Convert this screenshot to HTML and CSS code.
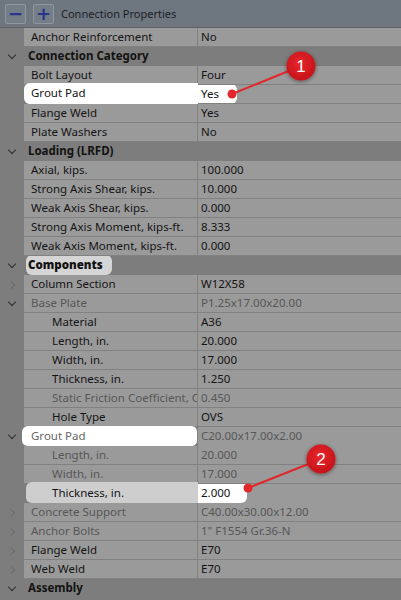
FILE: index.html
```html
<!DOCTYPE html>
<html lang="en">
<head>
  <meta charset="UTF-8" />
  <title>Connection Properties</title>
  <link rel="stylesheet" href="styles.css">
</head>
<body>

  <div class="panel">
    <div class="toolbar">
      <button class="tool">&minus;</button>
      <button class="tool">+</button>
      <span class="title">Connection Properties</span>
    </div>

    <div class="sheet">
      <div class="row"><span class="gut"></span><span class="name">Anchor Reinforcement</span><span class="val">No</span></div>

      <div class="row cat"><span class="gut"><i class="chev down"></i></span><span class="name">Connection Category</span></div>
      <div class="row"><span class="gut"></span><span class="name">Bolt Layout</span><span class="val">Four</span></div>
      <div class="row lit"><span class="gut"></span><span class="name">Grout Pad</span><span class="val"><b class="spot-end">Yes</b></span></div>
      <div class="row"><span class="gut"></span><span class="name">Flange Weld</span><span class="val">Yes</span></div>
      <div class="row"><span class="gut"></span><span class="name">Plate Washers</span><span class="val">No</span></div>

      <div class="row cat"><span class="gut"><i class="chev down"></i></span><span class="name">Loading (LRFD)</span></div>
      <div class="row"><span class="gut"></span><span class="name">Axial, kips.</span><span class="val">100.000</span></div>
      <div class="row"><span class="gut"></span><span class="name">Strong Axis Shear, kips.</span><span class="val">10.000</span></div>
      <div class="row"><span class="gut"></span><span class="name">Weak Axis Shear, kips.</span><span class="val">0.000</span></div>
      <div class="row"><span class="gut"></span><span class="name">Strong Axis Moment, kips-ft.</span><span class="val">8.333</span></div>
      <div class="row"><span class="gut"></span><span class="name">Weak Axis Moment, kips-ft.</span><span class="val">0.000</span></div>

      <div class="row cat"><span class="gut"><i class="chev down"></i></span><span class="name"><b class="chip">Components</b></span></div>
      <div class="row"><span class="gut"><i class="chev right"></i></span><span class="name">Column Section</span><span class="val">W12X58</span></div>
      <div class="row off"><span class="gut"><i class="chev down"></i></span><span class="name">Base Plate</span><span class="val">P1.25x17.00x20.00</span></div>
      <div class="row sub"><span class="gut"></span><span class="name">Material</span><span class="val">A36</span></div>
      <div class="row sub"><span class="gut"></span><span class="name">Length, in.</span><span class="val">20.000</span></div>
      <div class="row sub"><span class="gut"></span><span class="name">Width, in.</span><span class="val">17.000</span></div>
      <div class="row sub"><span class="gut"></span><span class="name">Thickness, in.</span><span class="val">1.250</span></div>
      <div class="row sub off"><span class="gut"></span><span class="name">Static Friction Coefficient, C</span><span class="val">0.450</span></div>
      <div class="row sub"><span class="gut"></span><span class="name">Hole Type</span><span class="val">OVS</span></div>
      <div class="row off pad"><span class="gut"><i class="chev down"></i></span><span class="name">Grout Pad</span><span class="val">C20.00x17.00x2.00</span></div>
      <div class="row sub off"><span class="gut"></span><span class="name">Length, in.</span><span class="val">20.000</span></div>
      <div class="row sub off"><span class="gut"></span><span class="name">Width, in.</span><span class="val">17.000</span></div>
      <div class="row sub edit"><span class="gut"></span><span class="name">Thickness, in.</span><span class="val"><b class="spot-end">2.000</b></span></div>
      <div class="row off"><span class="gut"><i class="chev right"></i></span><span class="name">Concrete Support</span><span class="val">C40.00x30.00x12.00</span></div>
      <div class="row off"><span class="gut"><i class="chev right"></i></span><span class="name">Anchor Bolts</span><span class="val">1" F1554 Gr.36-N</span></div>
      <div class="row"><span class="gut"><i class="chev right"></i></span><span class="name">Flange Weld</span><span class="val">E70</span></div>
      <div class="row"><span class="gut"><i class="chev right"></i></span><span class="name">Web Weld</span><span class="val">E70</span></div>

      <div class="row cat"><span class="gut"><i class="chev down"></i></span><span class="name">Assembly</span></div>
    </div>

    <!-- numbered callouts pointing at the edited fields -->
    <svg class="callouts" width="401" height="600" viewBox="0 0 401 600">
      <defs>
        <radialGradient id="badge" cx="45%" cy="40%" r="60%">
          <stop offset="0" stop-color="#e8262b"/>
          <stop offset="1" stop-color="#c4141a"/>
        </radialGradient>
        <filter id="drop" x="-50%" y="-50%" width="200%" height="200%">
          <feDropShadow dx="0" dy="1" stdDeviation="2" flood-color="#000" flood-opacity="0.45"/>
        </filter>
      </defs>
      <g>
        <line x1="232" y1="94" x2="301" y2="66" stroke="#e3262b" stroke-width="2"/>
        <circle cx="232" cy="94" r="4.5" fill="#e3262b"/>
        <circle cx="301" cy="66" r="14.5" fill="url(#badge)" filter="url(#drop)"/>
        <text x="301" y="72" class="num">1</text>
      </g>
      <g>
        <line x1="248" y1="488" x2="321" y2="459" stroke="#e3262b" stroke-width="2"/>
        <circle cx="248" cy="488" r="4.5" fill="#e3262b"/>
        <circle cx="321" cy="459" r="14.5" fill="url(#badge)" filter="url(#drop)"/>
        <text x="321" y="465" class="num">2</text>
      </g>
    </svg>
  </div>

</body>
</html>
```

FILE: styles.css
```css
body {
  margin: 0;
  background: #7d7d7d;
  font-family: "Noto Sans", "Open Sans", sans-serif;
  font-size: 11.5px;
  color: #141414;
}

.panel {
  position: relative;
  width: 401px;
  height: 600px;
  overflow: hidden;
  background: #7d7d7d;
}

/* dimmed toolbar */
.toolbar {
  height: 27px;
  background: #6e7680;
  border-bottom: 1px solid #5e6166;
  display: flex;
  align-items: center;
  padding-left: 5px;
  gap: 7px;
}

.tool {
  width: 21px;
  height: 20px;
  padding: 0;
  border: 1px solid #8f969e;
  border-radius: 2px;
  background: #747d88;
  color: #27358a;
  font-family: "DejaVu Sans", sans-serif;
  font-size: 18px;
  font-weight: bold;
  line-height: 16px;
}

.title {
  font-size: 11px;
  color: #1c1f26;
}

/* property grid */
.row {
  display: grid;
  grid-template-columns: 24px 174px 1fr;
  height: 19px;
  line-height: 18px;
}

.gut {
  display: flex;
  align-items: center;
  justify-content: center;
}

.name, .val {
  background: #9a9a9a;
  border-bottom: 1px solid #818181;
  white-space: nowrap;
  overflow: hidden;
}

.name {
  padding-left: 7px;
  border-right: 1px solid #818181;
}

.val {
  padding-left: 3px;
}

.sub .name {
  padding-left: 28px;
}

.off .name, .off .val {
  color: #575757;
}

.cat .name {
  grid-column: 2 / 4;
  background: transparent;
  border: none;
  font-weight: bold;
  color: #121212;
  padding-left: 4px;
}

/* tree chevrons */
.chev {
  display: block;
  width: 5px;
  height: 5px;
  border-right: 1.5px solid #2e2e2e;
  border-bottom: 1.5px solid #2e2e2e;
}

.chev.down {
  transform: translateY(-2px) rotate(45deg);
}

.chev.right {
  border-color: #6c6c6c;
  transform: translateX(-1px) rotate(-45deg);
}

/* spotlighted fields */
.lit .name {
  background: #fff;
  border-right-color: #fff;
  border-bottom-color: #fff;
  border-radius: 6px 0 0 6px;
  margin-top: -2px;
  line-height: 20px;
}

.lit .val, .edit .val {
  padding-left: 0;
}

.spot-end {
  display: inline-block;
  font-weight: normal;
  background: #fff;
  border-radius: 0 6px 6px 0;
  padding-left: 3px;
}

.lit .spot-end {
  width: 36px;
  height: 20px;
  margin-top: -2px;
  line-height: 20px;
}

.chip {
  display: inline-block;
  background: #d5d5d5;
  border-radius: 6px;
  padding: 0 9px 0 2px;
  height: 20px;
  line-height: 20px;
  margin-top: -1px;
  margin-left: -2px;
}

.pad .name {
  background: #fff;
  border-radius: 6px;
  margin-left: -2px;
  padding-left: 9px;
  margin-top: -1px;
  height: 20px;
  line-height: 20px;
  color: #666;
}

.edit .name {
  background: #cecece;
  border-right-color: #cecece;
  border-radius: 6px 0 0 6px;
  margin-left: 2px;
  padding-left: 26px;
  margin-top: -2px;
  height: 21px;
  line-height: 21px;
}

.edit .spot-end {
  width: 46px;
  height: 21px;
  margin-top: -2px;
  line-height: 21px;
}

.callouts {
  position: absolute;
  left: 0;
  top: 0;
  pointer-events: none;
}

.num {
  fill: #fff;
  font-family: "Liberation Sans", Arial, sans-serif;
  font-size: 17px;
  text-anchor: middle;
}
```
